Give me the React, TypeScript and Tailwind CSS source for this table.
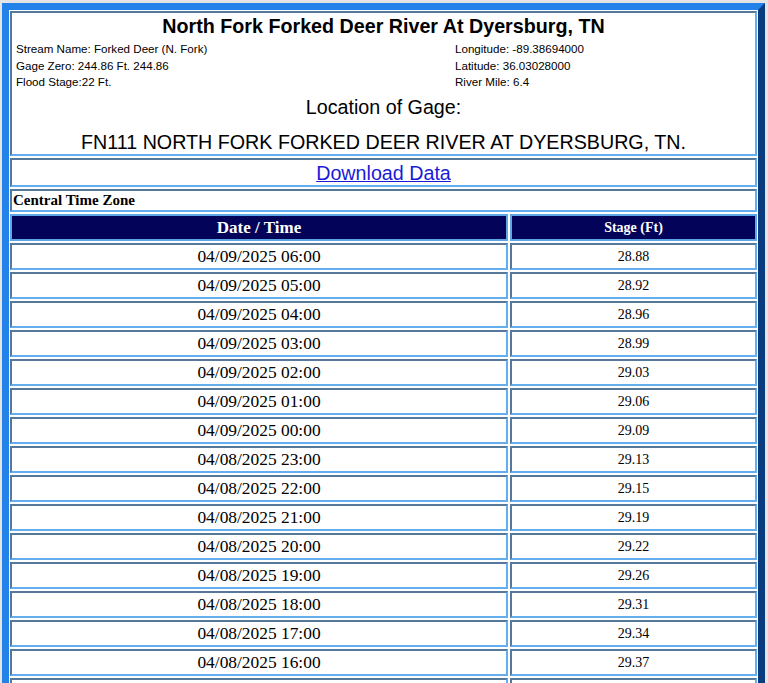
import React from "react";

const rows: [string, string][] = [
  ["04/09/2025 06:00", "28.88"],
  ["04/09/2025 05:00", "28.92"],
  ["04/09/2025 04:00", "28.96"],
  ["04/09/2025 03:00", "28.99"],
  ["04/09/2025 02:00", "29.03"],
  ["04/09/2025 01:00", "29.06"],
  ["04/09/2025 00:00", "29.09"],
  ["04/08/2025 23:00", "29.13"],
  ["04/08/2025 22:00", "29.15"],
  ["04/08/2025 21:00", "29.19"],
  ["04/08/2025 20:00", "29.22"],
  ["04/08/2025 19:00", "29.26"],
  ["04/08/2025 18:00", "29.31"],
  ["04/08/2025 17:00", "29.34"],
  ["04/08/2025 16:00", "29.37"],
];

const cell =
  "border-2 border-t-[#56789a] border-l-[#56789a] border-b-[#64aef0] border-r-[#64aef0] bg-white";

export default function App() {
  return (
    <div className="bg-[#e4e4e4] h-[683px] overflow-hidden pl-[2px] pr-[3px] pt-[3px]">
      <div className="border-[7px] border-t-[#2381ea] border-l-[#2381ea] border-r-[#083c7e] border-b-[#083c7e] bg-white p-[1px] flex flex-col gap-[2px]">
        <div className={`${cell} h-[145px] flex flex-col font-['Liberation_Sans',Arial,sans-serif] text-black`}>
          <div className="text-center text-[19.7px] leading-[24px] font-bold mt-[1px]">
            North Fork Forked Deer River At Dyersburg, TN
          </div>
          <div className="flex text-[11.6px] leading-[16.5px] mt-[3px]">
            <div className="w-[443px] pl-[4px]">
              <div>Stream Name: Forked Deer (N. Fork)</div>
              <div>Gage Zero: 244.86 Ft. 244.86</div>
              <div>Flood Stage:22 Ft.</div>
            </div>
            <div>
              <div>Longitude: -89.38694000</div>
              <div>Latitude: 36.03028000</div>
              <div>River Mile: 6.4</div>
            </div>
          </div>
          <div className="text-center text-[19.7px] leading-[24px] mt-[4px]">Location of Gage:</div>
          <div className="text-center text-[19.7px] leading-[24px] mt-[11px]">
            FN111 NORTH FORK FORKED DEER RIVER AT DYERSBURG, TN.
          </div>
        </div>
        <div className={`${cell} h-[29px] flex items-center justify-center font-['Liberation_Sans',Arial,sans-serif]`}>
          <a href="#" className="text-[19.7px] leading-[24px] text-[#1a1ad6] underline">
            Download Data
          </a>
        </div>
        <div className={`${cell} h-[23px] flex items-center pl-[1px] font-['Liberation_Serif','Times_New_Roman',serif] font-bold text-[15px] text-black`}>
          Central Time Zone
        </div>
        <div className="flex flex-col gap-[2px] font-['Liberation_Serif','Times_New_Roman',serif]">
          <div className="flex gap-[2px]">
            <div className="w-[498px] h-[27px] bg-[#03035a] border-2 border-[#5ea6e6] flex items-center justify-center text-white font-bold text-[17px]">
              Date / Time
            </div>
            <div className="flex-1 h-[27px] bg-[#03035a] border-2 border-[#5ea6e6] flex items-center justify-center text-white font-bold text-[14px]">
              Stage (Ft)
            </div>
          </div>
          {rows.map(([d, s]) => (
            <div key={d} className="flex gap-[2px]">
              <div className={`${cell} w-[498px] h-[27px] flex items-center justify-center text-black text-[17.4px]`}>
                {d}
              </div>
              <div className={`${cell} flex-1 h-[27px] flex items-center justify-center text-black text-[14px]`}>
                {s}
              </div>
            </div>
          ))}
          <div className="flex gap-[2px]">
            <div className={`${cell} w-[498px] h-[27px]`} />
            <div className={`${cell} flex-1 h-[27px]`} />
          </div>
        </div>
      </div>
    </div>
  );
}
